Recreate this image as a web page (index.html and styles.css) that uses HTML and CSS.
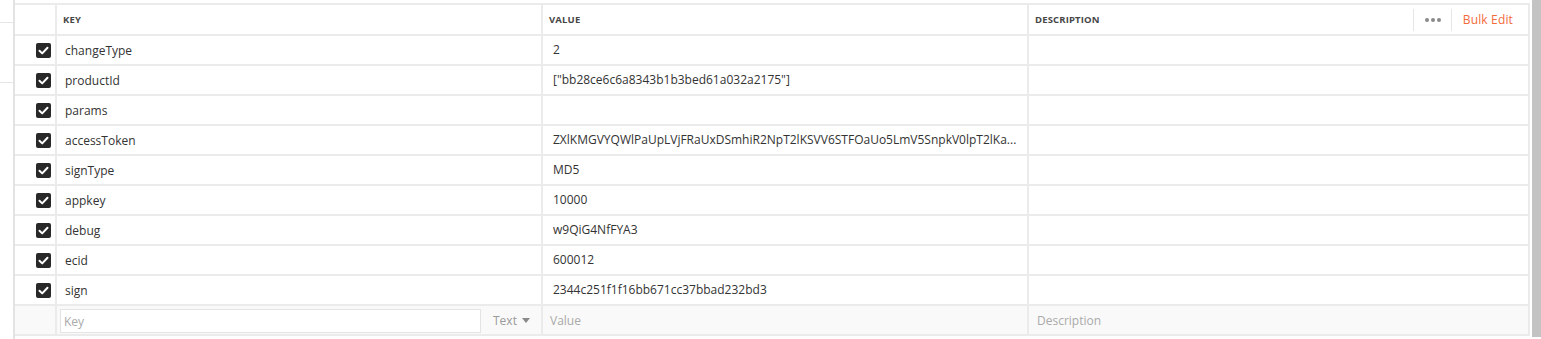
FILE: index.html
```html
<!DOCTYPE html>
<html>
<head>
<meta charset="utf-8">
<link rel="stylesheet" href="styles.css">
</head>
<body>
<div class="page">
  <div class="side">
    <div class="side-line first"></div>
    <div class="side-line second"></div>
  </div>
  <div class="main">
    <div class="table">
      <div class="row head">
        <div class="cell"></div>
        <div class="cell th">KEY</div>
        <div class="cell th">VALUE</div>
        <div class="cell th desc-head">
          <span class="th-label">DESCRIPTION</span>
          <span class="tools">
            <span class="dots"><i></i><i></i><i></i></span>
            <span class="bulk">Bulk Edit</span>
          </span>
        </div>
      </div>
      <div class="row"><div class="cell cb"><span class="check"><svg viewBox="0 0 15 15"><path d="M3.5 7.8 L6.2 10.4 L11.5 4.8" /></svg></span></div><div class="cell k">changeType</div><div class="cell v">2</div><div class="cell"></div></div>
      <div class="row"><div class="cell cb"><span class="check"><svg viewBox="0 0 15 15"><path d="M3.5 7.8 L6.2 10.4 L11.5 4.8" /></svg></span></div><div class="cell k">productId</div><div class="cell v">["bb28ce6c6a8343b1b3bed61a032a2175"]</div><div class="cell"></div></div>
      <div class="row"><div class="cell cb"><span class="check"><svg viewBox="0 0 15 15"><path d="M3.5 7.8 L6.2 10.4 L11.5 4.8" /></svg></span></div><div class="cell k">params</div><div class="cell v"></div><div class="cell"></div></div>
      <div class="row"><div class="cell cb"><span class="check"><svg viewBox="0 0 15 15"><path d="M3.5 7.8 L6.2 10.4 L11.5 4.8" /></svg></span></div><div class="cell k">accessToken</div><div class="cell v">ZXlKMGVYQWlPaUpLVjFRaUxDSmhiR2NpT2lKSVV6STFOaUo5LmV5SnpkV0lpT2lKa...</div><div class="cell"></div></div>
      <div class="row"><div class="cell cb"><span class="check"><svg viewBox="0 0 15 15"><path d="M3.5 7.8 L6.2 10.4 L11.5 4.8" /></svg></span></div><div class="cell k">signType</div><div class="cell v">MD5</div><div class="cell"></div></div>
      <div class="row"><div class="cell cb"><span class="check"><svg viewBox="0 0 15 15"><path d="M3.5 7.8 L6.2 10.4 L11.5 4.8" /></svg></span></div><div class="cell k">appkey</div><div class="cell v">10000</div><div class="cell"></div></div>
      <div class="row"><div class="cell cb"><span class="check"><svg viewBox="0 0 15 15"><path d="M3.5 7.8 L6.2 10.4 L11.5 4.8" /></svg></span></div><div class="cell k">debug</div><div class="cell v">w9QiG4NfFYA3</div><div class="cell"></div></div>
      <div class="row"><div class="cell cb"><span class="check"><svg viewBox="0 0 15 15"><path d="M3.5 7.8 L6.2 10.4 L11.5 4.8" /></svg></span></div><div class="cell k">ecid</div><div class="cell v">600012</div><div class="cell"></div></div>
      <div class="row"><div class="cell cb"><span class="check"><svg viewBox="0 0 15 15"><path d="M3.5 7.8 L6.2 10.4 L11.5 4.8" /></svg></span></div><div class="cell k">sign</div><div class="cell v">2344c251f1f16bb671cc37bbad232bd3</div><div class="cell"></div></div>
      <div class="row new">
        <div class="cell"></div>
        <div class="cell key-new">
          <span class="key-input">Key</span>
          <span class="type">Text <span class="caret"></span></span>
        </div>
        <div class="cell ph val-ph">Value</div>
        <div class="cell ph desc-ph">Description</div>
      </div>
    </div>
  </div>
  <div class="gapcol"></div>
  <div class="scroll"></div>
</div>
</body>
</html>
```

FILE: styles.css
```css
html, body {
  margin: 0;
  padding: 0;
  background: #fff;
}
body {
  font-family: "Open Sans", "Liberation Sans", sans-serif;
  font-size: 12px;
  color: #333;
  width: 1541px;
  height: 339px;
  overflow: hidden;
}
.page {
  display: flex;
  height: 339px;
}
.side {
  width: 13px;
  border-right: 2px solid #e3e3e3;
  flex: none;
  display: flex;
  flex-direction: column;
}
.side-line {
  height: 1px;
  background: #e6e6e6;
}
.side-line.first { margin-top: 22px; }
.side-line.second { margin-top: 59px; }
.main {
  flex: 1;
  padding-top: 3px;
}
.gapcol { width: 2px; flex: none; }
.scroll {
  width: 9px;
  flex: none;
  height: 337px;
  background: #c3c3c3;
}
.table {
  display: flex;
  flex-direction: column;
  gap: 2px;
  background: #ebebeb;
  padding: 2px 2px 2px 0;
}
.row {
  display: grid;
  grid-template-columns: 40px 484px 484px 1fr;
  gap: 2px;
  height: 28px;
}
.row.head {
  height: 29px;
}
.cell {
  background: #fff;
  display: flex;
  align-items: center;
  min-width: 0;
  white-space: nowrap;
}
.th {
  font-size: 9.5px;
  font-weight: 700;
  color: #474747;
  padding-left: 6px;
  letter-spacing: 0.15px;
}
.desc-head {
  justify-content: space-between;
}
.tools {
  display: flex;
  align-items: center;
  height: 22px;
  padding-right: 15px;
}
.dots {
  border-left: 1px solid #e6e6e6;
  border-right: 1px solid #e6e6e6;
  height: 22px;
  display: flex;
  align-items: center;
  gap: 2px;
  padding: 0 10px 0 11px;
}
.dots i {
  display: block;
  width: 4px;
  height: 4px;
  border-radius: 50%;
  background: #8a8a8a;
}
.bulk {
  color: #f26b3a;
  font-size: 12px;
  font-weight: 400;
  margin-left: 11px;
}
.cb {
  justify-content: flex-end;
  padding-right: 4px;
}
.check {
  width: 15px;
  height: 15px;
  border-radius: 2px;
  background: #282828;
  display: flex;
}
.check svg {
  width: 15px;
  height: 15px;
}
.check path {
  fill: none;
  stroke: #fff;
  stroke-width: 2;
  stroke-linecap: round;
  stroke-linejoin: round;
}
.k {
  padding-left: 8px;
}
.v {
  display: block;
  padding: 0 10px;
  line-height: 28px;
  overflow: hidden;
  text-overflow: ellipsis;
}
.new .cell {
  background: #f9f9f9;
}
.key-new {
  padding-left: 3px;
}
.key-input {
  width: 416px;
  height: 22px;
  border: 1px solid #e4e4e4;
  background: #fff;
  color: #aaa;
  display: flex;
  align-items: center;
  padding-left: 3px;
  margin-top: 2px;
}
.type {
  color: #9a9a9a;
  margin-left: 12px;
  display: flex;
  align-items: center;
}
.caret {
  display: block;
  width: 0;
  height: 0;
  margin-left: 5px;
  border-left: 4px solid transparent;
  border-right: 4px solid transparent;
  border-top: 5px solid #8a8a8a;
}
.ph {
  color: #aaa;
}
.val-ph { padding-left: 7px; }
.desc-ph { padding-left: 8px; }
```
